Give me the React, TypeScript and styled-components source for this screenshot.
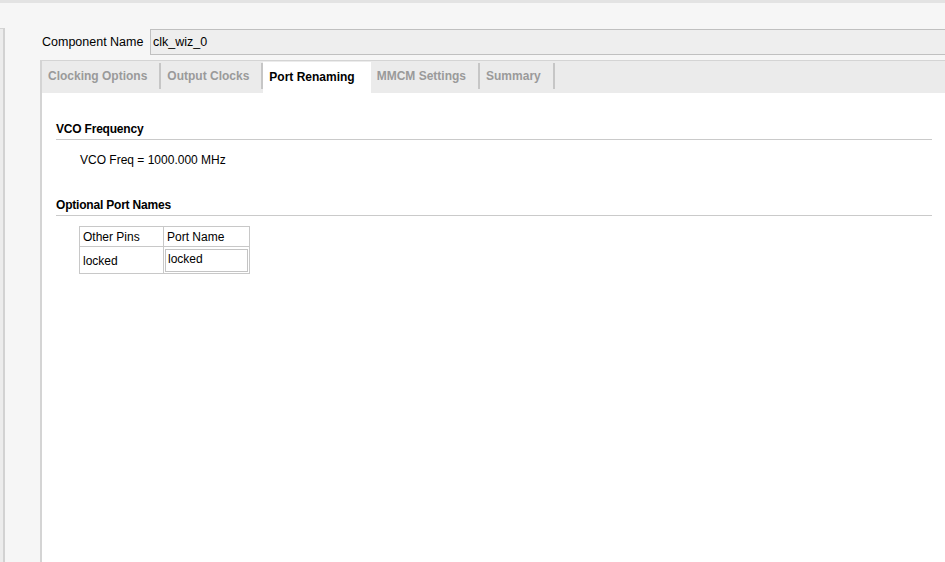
import React from "react";
import styled, { createGlobalStyle } from "styled-components";

const Global = createGlobalStyle`
  html, body { margin: 0; padding: 0; background: #f6f6f6; }
  body { font-family: "Liberation Sans", Arial, sans-serif; font-size: 12px; color: #000; overflow: hidden; }
  #root { height: 562px; }
`;

const Page = styled.div`
  height: 562px;
  display: flex;
  flex-direction: column;
  border-top: 3px solid #e3e3e3;
  box-sizing: border-box;
`;

const Main = styled.div`
  flex: 1;
  display: flex;
  min-height: 0;
`;

const SidePanel = styled.div`
  width: 3px;
  margin-top: 25px;
  background: #ececec;
  border-top: 1px solid #d4d4d4;
  border-right: 2px solid #d2d2d2;
`;

const Content = styled.div`
  flex: 1;
  margin-left: 35px;
  display: flex;
  flex-direction: column;
  min-width: 0;
`;

const NameRow = styled.div`
  display: flex;
  align-items: center;
  margin-top: 26px;
  padding-left: 2px;
  height: 26px;
`;

const NameLabel = styled.span`
  width: 108px;
  font-size: 12.5px;
  white-space: nowrap;
`;

const NameInput = styled.div`
  flex: 1;
  height: 24px;
  border: 1px solid #c0c0c0;
  border-right: none;
  background: #eeeeee;
  display: flex;
  align-items: center;
  padding-left: 2px;
  font-size: 12.5px;
`;

const TabPanel = styled.div`
  flex: 1;
  margin-top: 5px;
  border-top: 1px solid #d4d4d4;
  border-left: 2px solid #d4d4d4;
  display: flex;
  flex-direction: column;
  background: #fff;
`;

const TabStrip = styled.div`
  display: flex;
  height: 32px;
  background: #ebebeb;
  align-items: stretch;
`;

const Tab = styled.div<{ $active?: boolean }>`
  position: relative;
  display: flex;
  align-items: center;
  padding: 0 ${(p) => (p.$active ? 16 : 14)}px 2px 6px;
  margin-top: ${(p) => (p.$active ? 1 : 0)}px;
  font-weight: bold;
  font-size: 12px;
  white-space: nowrap;
  color: ${(p) => (p.$active ? "#000" : "#9a9a9a")};
  background: ${(p) => (p.$active ? "#fff" : "transparent")};
  &::after {
    content: "";
    display: ${(p) => (p.$active ? "none" : "block")};
    position: absolute;
    right: 0;
    top: 2px;
    bottom: 4px;
    width: 2px;
    background: #c6c6c6;
  }
`;

const Body = styled.div`
  flex: 1;
  padding: 29px 13px 0 14px;
  background: #fff;
`;

const Section = styled.div<{ $gap: number }>`
  margin-top: ${(p) => p.$gap}px;
`;

const Heading = styled.div`
  font-weight: bold;
  font-size: 12px;
  letter-spacing: -0.2px;
  line-height: 14px;
  padding-bottom: 3px;
  border-bottom: 1px solid #cacaca;
`;

const InfoLine = styled.div`
  margin: 13px 0 0 24px;
  line-height: 14px;
`;

const Table = styled.table`
  margin: 10px 0 0 23px;
  border-collapse: collapse;
  border: 1px solid #c8c8c8;
`;

const HeadCell = styled.td<{ $w: number }>`
  width: ${(p) => p.$w}px;
  height: 20px;
  box-sizing: border-box;
  border: 1px solid #c8c8c8;
  padding: 0 3px;
  line-height: 14px;
`;

const Cell = styled.td`
  height: 27px;
  box-sizing: border-box;
  border: 1px solid #c8c8c8;
  padding: 2px 3px 0;
`;

const EditCell = styled.td`
  height: 27px;
  box-sizing: border-box;
  border: 1px solid #c8c8c8;
  padding: 1px;
`;

const CellInput = styled.div`
  height: 23px;
  box-sizing: border-box;
  border: 1px solid #c4c4c4;
  padding: 0 2px 3px;
  display: flex;
  align-items: center;
`;

export default function App() {
  const tabs = ["Clocking Options", "Output Clocks", "Port Renaming", "MMCM Settings", "Summary"];
  return (
    <>
      <Global />
      <Page>
        <Main>
          <SidePanel />
          <Content>
            <NameRow>
              <NameLabel>Component Name</NameLabel>
              <NameInput>clk_wiz_0</NameInput>
            </NameRow>
            <TabPanel>
              <TabStrip>
                {tabs.map((t) => (
                  <Tab key={t} $active={t === "Port Renaming"}>
                    {t}
                  </Tab>
                ))}
              </TabStrip>
              <Body>
                <Section $gap={0}>
                  <Heading>VCO Frequency</Heading>
                  <InfoLine>VCO Freq = 1000.000 MHz</InfoLine>
                </Section>
                <Section $gap={31}>
                  <Heading>Optional Port Names</Heading>
                  <Table>
                    <tbody>
                      <tr>
                        <HeadCell $w={84}>Other Pins</HeadCell>
                        <HeadCell $w={86}>Port Name</HeadCell>
                      </tr>
                      <tr>
                        <Cell>locked</Cell>
                        <EditCell>
                          <CellInput>locked</CellInput>
                        </EditCell>
                      </tr>
                    </tbody>
                  </Table>
                </Section>
              </Body>
            </TabPanel>
          </Content>
        </Main>
      </Page>
    </>
  );
}
